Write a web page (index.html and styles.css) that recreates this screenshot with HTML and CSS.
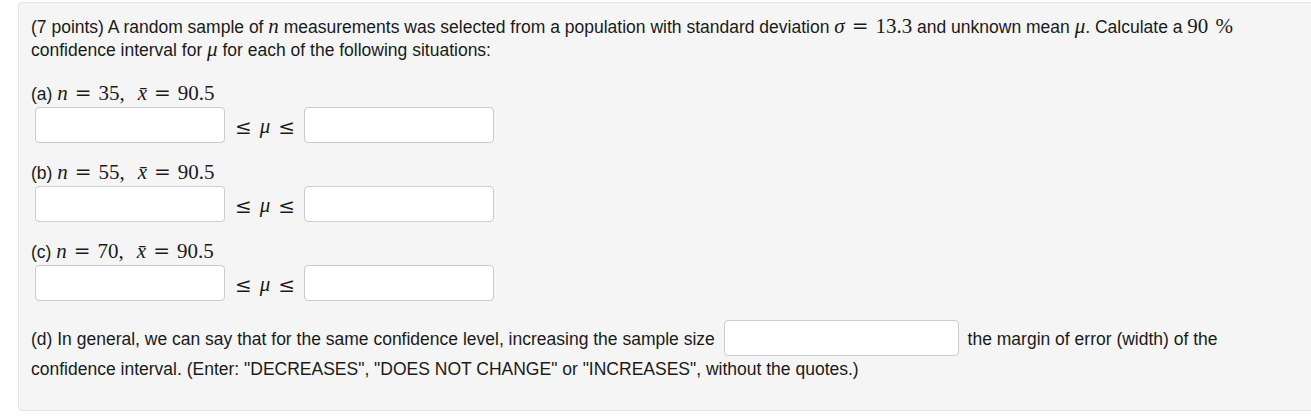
FILE: index.html
```html
<!DOCTYPE html>
<html>
<head>
<meta charset="utf-8">
<link rel="stylesheet" href="styles.css">
</head>
<body>
<div class="panel">
  <p class="intro">(7 points) A random sample of <span class="m"><i>n</i></span> measurements was selected from a population with standard deviation <span class="m"><i>σ</i><span class="op wide-op">=</span>13.3</span> and unknown mean <span class="m"><i>μ</i></span>. Calculate a <span class="m">90 <span class="pct">%</span></span> confidence interval for <span class="m"><i>μ</i></span> for each of the following situations:</p>

  <div class="part first">
    <div class="label">(a) <span class="m"><i class="n">n</i><span class="op">=</span>35,<span class="sp"></span><i>x̄</i><span class="op">=</span>90.5</span></div>
    <div class="row"><input class="box" type="text"><span class="rel"><span class="le">≤</span><i>μ</i><span class="le">≤</span></span><input class="box" type="text"></div>
  </div>
  <div class="part">
    <div class="label">(b) <span class="m"><i class="n">n</i><span class="op">=</span>55,<span class="sp"></span><i>x̄</i><span class="op">=</span>90.5</span></div>
    <div class="row"><input class="box" type="text"><span class="rel"><span class="le">≤</span><i>μ</i><span class="le">≤</span></span><input class="box" type="text"></div>
  </div>
  <div class="part">
    <div class="label">(c) <span class="m"><i class="n">n</i><span class="op">=</span>70,<span class="sp"></span><i>x̄</i><span class="op">=</span>90.5</span></div>
    <div class="row"><input class="box" type="text"><span class="rel"><span class="le">≤</span><i>μ</i><span class="le">≤</span></span><input class="box" type="text"></div>
  </div>

  <p class="d">(d) In general, we can say that for the same confidence level, increasing the sample size <input class="wide" type="text"> the margin of error (width) of the confidence interval. (Enter: "DECREASES", "DOES NOT CHANGE" or "INCREASES", without the quotes.)</p>
</div>
</body>
</html>
```
FILE: styles.css
```css
html, body {
  margin: 0;
  padding: 0;
  background: #ffffff;
  overflow: hidden;
}
body {
  font-family: "Liberation Sans", Arial, sans-serif;
  font-size: 17.5px;
  color: #1a1a1a;
}
.panel {
  margin: 2px 0 0 18px;
  width: 1320px;
  height: 409px;
  box-sizing: border-box;
  background: #f5f5f5;
  border: 1px solid #e3e3e3;
  border-radius: 4px;
  padding: 13px 47px 0 12px;
}
.intro {
  margin: 0;
  line-height: 23px;
}
.m {
  font-family: "Liberation Serif", "Times New Roman", serif;
  font-size: 21px;
  line-height: 20px;
}
.m i, .rel i {
  font-style: italic;
}
.op {
  font-family: "DejaVu Serif", serif;
  font-size: 20px;
  margin: 0 7px;
}
.op.wide-op {
  margin: 0 7px;
}
.sp {
  display: inline-block;
  width: 13px;
}
.pct {
  margin-left: 2px;
}
.part {
  margin-top: 19px;
}
.part.first {
  margin-top: 21px;
}
.label {
  line-height: 23px;
  height: 23px;
}
.row {
  display: flex;
  align-items: center;
  margin-top: 1px;
  padding-left: 4px;
}
.box, .wide {
  box-sizing: border-box;
  height: 36px;
  background: #fff;
  border: 1px solid #cccccc;
  border-radius: 4px;
  margin: 0;
  padding: 0 8px;
  font: inherit;
}
.box {
  width: 190px;
}
.rel {
  display: flex;
  align-items: center;
  font-family: "Liberation Serif", "Times New Roman", serif;
  font-size: 21px;
  margin: 0 9px 0 10px;
  padding-top: 3px;
}
.le {
  font-family: "DejaVu Serif", serif;
  font-size: 20px;
}
.rel i {
  margin: 0 8px;
}
.d {
  margin: 23px 0 0 0;
  line-height: 30px;
}
.wide {
  width: 235px;
  vertical-align: middle;
  margin: -6px 4px -2px 4px;
}
```
